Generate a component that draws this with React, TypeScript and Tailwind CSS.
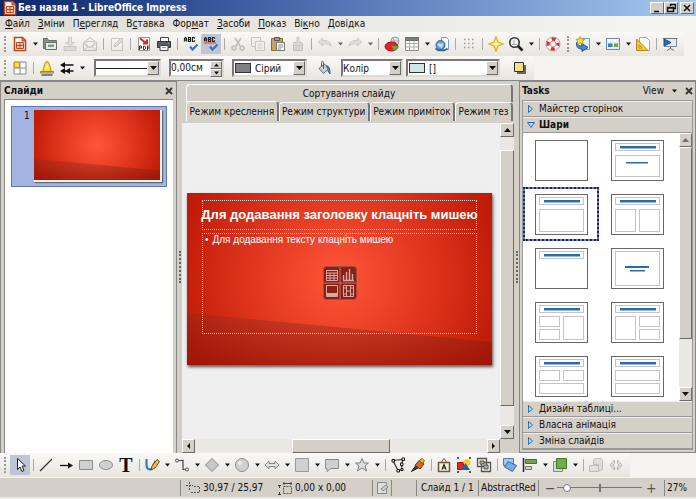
import React, { useState } from 'react';
import clsx from 'clsx';

const raised = 'border border-t-white border-l-white border-r-[#6b6b6b] border-b-[#6b6b6b] bg-[#d4d0c8]';
const sunken = 'border-2 border-t-[#777] border-l-[#777] border-r-[#dedbd5] border-b-[#dedbd5] bg-white';

interface IconProps {
  children: React.ReactNode;
  faded?: boolean;
}

const Icon: React.FC<IconProps> = ({ children, faded }) => (
  <svg viewBox="0 0 16 16" className={clsx('w-4 h-4 shrink-0', faded && 'opacity-35')} fill="none" stroke="#555" strokeWidth="1" aria-hidden="true">
    {children}
  </svg>
);

const impress = (
  <>
    <path d="M2.500 1.500h8l3 3v10h-11z" fill="#fff" stroke="#b8491f" strokeWidth="1.600" />
    <path d="M10 1v4h4z" fill="#d9764d" stroke="#b8491f" />
    <path d="M4.500 6.500h7v6h-7z" fill="#f3c9b4" stroke="#b8491f" />
    <path d="M5 9.500h6M8 7v5" stroke="#b8491f" />
  </>
);

const check = <path d="M7 10.500l2.500 3L14.500 8.500" stroke="#3f74bd" strokeWidth="2.200" />;

const abc = (
  <path d="M1.500 5.500v-3l1-1 1 1v3M1.500 4h2M5.500 1.500v4h2v-4zM5.500 3.500h2M12 2.500l-1-1H9.500v4H11l1-1" stroke="#222" strokeWidth="1.200" />
);

const icons: Record<string, React.ReactNode> = {
  impress,
  open: (
    <>
      <path d="M1.500 12.500v-10h4l1 2h8v8z" fill="#8c948a" stroke="#676e66" />
      <path d="M3.500 6.500h11v7h-11z" fill="#e8eae6" stroke="#676e66" />
      <path d="M6 8.500h6v2.500H6z" fill="#8c948a" stroke="none" />
    </>
  ),
  save: <path d="M6.500 1.500h3v5h3L8 10.500 3.500 6.500h3zM2 10.500h12v4H2z" fill="#bbb" stroke="#888" />,
  mail: (
    <>
      <path d="M1.500 6.500L8 1.500l6.500 5v8h-13z" fill="#eee" stroke="#666" />
      <path d="M4 5.500h8v4l-4 2-4-2zM1.500 14.500l5-4M14.500 14.500l-5-4M1.500 7l6.500 4.500L14.500 7" fill="#fff" stroke="#777" />
    </>
  ),
  edit: (
    <>
      <path d="M2.500 2.500h11v12h-11z" fill="#f4f4f4" stroke="#777" />
      <path d="M5 11l1-3 6-6 2 2-6 6z" fill="#bbb" stroke="#777" />
    </>
  ),
  pdf: (
    <>
      <path d="M2.500 1.500h11v13h-11z" fill="#fff" stroke="#999" />
      <path d="M4 2.500l7 5M11 3.500v4H7" stroke="#e0202c" strokeWidth="2" />
      <path d="M3.500 14v-4h2v2h-2M7.500 10v3.500h1l1-1V11l-1-1zM11.500 14v-4h2M11.500 12h2" stroke="#333" />
    </>
  ),
  print: (
    <>
      <path d="M4.500 1.500h8v5h-8z" fill="#fff" stroke="#444" />
      <path d="M1.500 5.500h13v6h-13z" fill="#596064" stroke="#33383a" />
      <path d="M4 9.500h8v5H4z" fill="#fff" stroke="#444" />
      <path d="M6 11.500h4M12 7.500h1" stroke="#8ea08c" />
    </>
  ),
  spell: <>{abc}{check}</>,
  autospell: (
    <>
      {abc}
      <path d="M1 7h12" stroke="#e33" />
      {check}
    </>
  ),
  cut: (
    <>
      <path d="M5 2l5 8M11 2l-5 8" stroke="#666" strokeWidth="1.600" />
      <circle cx="4" cy="12" r="2" stroke="#666" strokeWidth="1.500" />
      <circle cx="12" cy="12" r="2" stroke="#666" strokeWidth="1.500" />
    </>
  ),
  copy: (
    <>
      <path d="M1.500 1.500h9v9h-9z" fill="#eee" stroke="#777" />
      <path d="M5.500 5.500h9v9h-9z" fill="#fff" stroke="#777" />
      <path d="M7.500 8h5M7.500 10h5M7.500 12h5" stroke="#999" />
    </>
  ),
  paste: (
    <>
      <path d="M1.500 2.500h11v12h-11z" fill="#c9a25a" stroke="#8d6a2b" />
      <path d="M4.500 1.500h5v3h-5z" fill="#999" stroke="#555" />
      <path d="M6.500 6.500h8v8h-8z" fill="#fff" stroke="#777" />
      <path d="M8 9h5M8 11h5M8 13h3" stroke="#888" />
    </>
  ),
  brush: <path d="M7 1.500h2v5h3l1 3H3l1-3h3zM3.500 9.500h9v5h-9zM6 11v3M9 11v3" fill="#bbb" stroke="#777" />,
  undo: <path d="M1.500 6l4-4v2.500c6-.5 8.500 2 8.500 6-1.500-2.500-4-3-8.500-2.500v2z" fill="#bbb" stroke="#888" />,
  redo: <path d="M14.500 6l-4-4v2.500c-6-.5-8.500 2-8.500 6 1.500-2.500 4-3 8.500-2.500v2z" fill="#bbb" stroke="#888" />,
  chart: (
    <>
      <circle cx="11" cy="5" r="4" fill="#dfe3e0" stroke="#999" />
      <path d="M9 1.500l3 7M7.500 5h7" stroke="#aaa" />
      <ellipse cx="7.500" cy="10.500" rx="6.500" ry="4.500" fill="#e3202c" stroke="#ab1420" />
      <path d="M7.500 10H14c0 2.500-1.500 4-4 4.500z" fill="#55b33b" stroke="none" />
    </>
  ),
  table: (
    <>
      <path d="M1.500 1.500h13v13h-13z" fill="#fff" stroke="#888" />
      <path d="M1.500 1.500h13v3h-13z" fill="#7b8180" stroke="#6b706f" />
      <path d="M2 7.500h12M2 11h12M5.500 5v9.500M10 5v9.500" stroke="#a9adab" />
    </>
  ),
  link: (
    <>
      <path d="M7.500 1.500h5l2 2v10h-7z" fill="#fff" stroke="#7b9dbd" />
      <circle cx="6.500" cy="9" r="4.500" fill="#6d9fd4" stroke="#2d649c" />
      <path d="M3 8.500c2-3 3 0 5-1s1 3 0 4-3-1-5-3z" fill="#c5e0f4" stroke="none" />
      <path d="M1.500 12.500l3 2h6l3-2" stroke="#2d649c" strokeWidth="1.600" />
    </>
  ),
  dots: <path d="M3 3.500h12M3 7.500h12M3 11.500h12" stroke="#999" strokeDasharray="1.500 2.500" strokeWidth="1.500" />,
  navigator: <path d="M8 1l2 5 5 2-5 2-2 5-2-5-5-2 5-2z" fill="#fff3a0" stroke="#e0ad12" strokeWidth="1.300" />,
  zoom: (
    <>
      <circle cx="6.500" cy="6.500" r="4.700" fill="#eef3f5" stroke="#333" strokeWidth="1.600" />
      <path d="M10 10l4.500 4.500" stroke="#222" strokeWidth="2.600" />
      <path d="M6 4v5M4 8.500h5" stroke="#aaa" />
    </>
  ),
  help: (
    <>
      <circle cx="8" cy="8" r="5" stroke="#fff" strokeWidth="4" />
      <circle cx="8" cy="8" r="5" stroke="#d8323b" strokeWidth="4" strokeDasharray="3.930 3.930" strokeDashoffset="2" />
      <circle cx="8" cy="8" r="7" stroke="#c99" />
      <circle cx="8" cy="8" r="3" stroke="#c99" />
    </>
  ),
  newSlide: (
    <>
      <path d="M6.500 2.500h8v11h-8z" fill="#e8f0f6" stroke="#7e99b2" />
      <path d="M1.500 6.500c1 3 3 3.500 5.500 3.500V7.500l6 4-6 4V13c-4 0-6-2-5.500-6.500z" fill="#4c88c6" stroke="#23588f" />
      <path d="M5 .5l1.500 2.500 3 .5-2 2 .5 2.500-3-1-2.500 1V5L1 3.500 4 3z" fill="#ffdf3d" stroke="#c79a12" />
    </>
  ),
  layout: (
    <>
      <path d="M1.500 2.500h13v11h-13z" fill="#e1edf5" stroke="#6f8ba5" />
      <path d="M3 4.500h10" stroke="#fff" strokeWidth="2" />
      <path d="M3 7.500h4.500V11H3z" fill="#3f7fb8" stroke="none" />
      <path d="M9 7.500h4V11H9z" fill="#71a640" stroke="none" />
    </>
  ),
  design: (
    <>
      <path d="M4.500 1.500h7l3 3v10h-10z" fill="#fafafa" stroke="#aaa" />
      <path d="M1.500 3v11.500H13z" fill="#f1c644" stroke="#b38a18" />
      <path d="M4 9v3h3z" fill="#fff" stroke="#b38a18" />
    </>
  ),
  present: (
    <>
      <path d="M2.500 2.500h12v8h-12z" fill="#e5ebef" stroke="#7f8a92" />
      <path d="M1 2.500h14.500M8.500 11v2M5 14.500l3.500-2 3.500 2" stroke="#6c757c" />
      <path d="M2 3l7 3.500L2 10z" fill="#2f69a8" stroke="#1c477a" />
    </>
  ),
  quad: (
    <>
      <path d="M2 2h12v12H2z" fill="#fff" stroke="#888" />
      <path d="M2.500 2.500h5v5h-5z" fill="#ffe03c" stroke="#c7a116" />
      <path d="M8 2v12M2 8h12" stroke="#888" />
    </>
  ),
  highlight: (
    <>
      <path d="M3.500 12c1-1 1.500-10.500 4.500-10.500S11.500 11 12.500 12z" fill="#ffd83b" stroke="#ba8f14" />
      <path d="M6.500 9.500L8 4.500l1.500 5M7 8h2" stroke="#fff5b8" />
      <path d="M1.500 11.500h13v1.500h-13z" fill="#f0c62d" stroke="#ab8314" />
      <path d="M2.500 15h11" stroke="#3465a4" strokeWidth="1.500" />
    </>
  ),
  arrows: (
    <>
      <path d="M5 5h9.500M5 11h9.500" stroke="#111" strokeWidth="1.500" />
      <path d="M1 5l5-3v6zM1 11l5-3v6zM6 11l5-3v6z" fill="#111" stroke="none" />
    </>
  ),
  bucket: (
    <>
      <path d="M3 8.500L8.500 4l4 5-5 4.500z" fill="#ccd1d1" stroke="#666" />
      <path d="M7.500 9V2.500c0-1.500-2-1.500-2 0V6" stroke="#555" />
      <path d="M10 6c3-.5 4 2 4 8l-2-3V8z" fill="#648fc9" stroke="#345f97" />
    </>
  ),
  shadow: (
    <>
      <path d="M5 5h9v9H5z" fill="#666" stroke="none" />
      <path d="M2.500 2.500h9v9h-9z" fill="#fbdf7c" stroke="#333" />
    </>
  ),
  select: <path d="M5.500 1.500v11l2.500-2.500 2 4.500 2-1-2-4.500h3.500z" fill="#fff" stroke="#222" />,
  line: <path d="M2 14L14 2" stroke="#333" strokeWidth="1.200" />,
  arrow: (
    <>
      <path d="M2 8.500h9" stroke="#111" strokeWidth="1.300" />
      <path d="M10 5.500l5 3-5 3z" fill="#111" stroke="none" />
    </>
  ),
  rect: <path d="M1.500 3.500h13v9h-13z" fill="#d0d0d0" stroke="#8c8c8c" />,
  ellipse: <ellipse cx="8" cy="8" rx="6.500" ry="4.500" fill="#d0d0d0" stroke="#8c8c8c" />,
  curve: (
    <>
      <path d="M2.500 2v5c0 7 6 7 7 1l2-4" stroke="#397ab9" strokeWidth="2.200" />
      <path d="M7 13l1-4 5-6.500 2.500 2L11 11z" fill="#efc33a" stroke="#604d1c" />
    </>
  ),
  connector: (
    <>
      <path d="M4 3.500h5v9h3" stroke="#444" strokeWidth="1.200" />
      <circle cx="3" cy="3.500" r="1.500" fill="#fff" stroke="#444" />
      <circle cx="13" cy="12.500" r="1.500" fill="#fff" stroke="#444" />
    </>
  ),
  diamond: <path d="M8 1.500l6.500 6.500L8 14.500 1.500 8z" fill="#c6c9c8" stroke="#858988" />,
  circle: (
    <>
      <circle cx="8" cy="8" r="6.500" fill="#cfd1d0" stroke="#8c8f8e" />
      <circle cx="6" cy="6" r="2" fill="#eee" stroke="none" />
    </>
  ),
  block: <path d="M1 8l4-4v2.500h6V4l4 4-4 4V9.500H5V12z" fill="#e2e2e2" stroke="#858988" />,
  square: <path d="M1.500 1.500h13v13h-13z" fill="#cfd1d0" stroke="#999" />,
  callout: <path d="M1.500 2.500h13v9H7l-4 3v-3H1.500z" fill="#cfd1d0" stroke="#858988" />,
  star: <path d="M8 1.500l2 4.500h4.500L11 9l1.500 5L8 11l-4.500 3L5 9 1.500 6H6z" fill="#dcdddc" stroke="#7e8281" />,
  points: (
    <>
      <path d="M3 3.500l10-1-1.500 5 .5 5-4 1z" stroke="#333" strokeWidth="1.200" />
      <path d="M2 2.500h2.500V5H2zM12 1h2.500v2.500H12zM7 12.500h2.500V15H7zM10.500 6H13v2.500h-2.500zM11 11.500h2v2h-2z" fill="#fff" stroke="#111" />
    </>
  ),
  glue: (
    <>
      <path d="M1.500 14.500l4-5.500 2.500 2z" fill="#333" stroke="#222" />
      <path d="M5 8.500l4-5 5 3.500-4 5z" fill="#d9682c" stroke="#5a3312" />
      <path d="M9 4l3-2.500 2.500 2L13 6z" fill="#e8c23a" stroke="#86661a" />
    </>
  ),
  fontwork: (
    <>
      <path d="M2.500 5.500h11v9h-11z" fill="#f2ecd8" stroke="#6b5a3f" strokeWidth="1.500" />
      <path d="M5 5.500l3-4 3 4" stroke="#6b5a3f" />
      <path d="M6 12.500L8 7.500l2 5M7 11h2" stroke="#222" strokeWidth="1.200" />
    </>
  ),
  gallery: (
    <>
      <path d="M1.500 5.500h6v7h-6z" fill="#d82a20" stroke="#a11" />
      <circle cx="11" cy="5.500" r="3.500" fill="#f7cf2d" stroke="none" />
      <path d="M9.500 6l4.500 7H5z" fill="#275cae" stroke="none" />
      <path d="M1 1h2M13 1h2M1 15h2M13 15h2" stroke="#222" strokeWidth="1.500" />
    </>
  ),
  group: (
    <>
      <path d="M1.500 1.500h9v8h-9zM5.500 5.500h9v9h-9z" fill="#eee" stroke="#555" strokeWidth="1.300" />
      <path d="M4 4h4v3H4zM8 8h4v4H8z" fill="#b8b48a" stroke="#555" />
    </>
  ),
  rotate: (
    <>
      <path d="M1.500 1.500h10v7h-10z" fill="#a9c9ec" stroke="#4a7fbd" />
      <path d="M6 4.500l8.500 4-4 6-8-4.500z" fill="#7facde" stroke="#3468a8" />
    </>
  ),
  align: (
    <>
      <path d="M1.500 1v14" stroke="#222" strokeWidth="1.500" />
      <path d="M3.500 2.500h11v4h-11z" fill="#6fa54b" stroke="#3e6c55" />
      <path d="M3.500 9.500h6v3h-6z" fill="#cfd7dd" stroke="#66757e" />
    </>
  ),
  arrange: (
    <>
      <path d="M1.500 4.500h9v10h-9z" fill="#cdd" stroke="#888" />
      <path d="M4.500 1.500h10v10h-10z" fill="#72ad4a" stroke="#447a24" />
    </>
  ),
  extrude: (
    <>
      <path d="M1.500 8.500h9v6h-9z" fill="#ccc" stroke="#666" />
      <path d="M5.500 2.500l2-1h6l1 2v9l-2 1h-2v-6h-5z" fill="#bbb" stroke="#666" />
    </>
  ),
  code: <path d="M6.500 3L2 8l4.500 5V9.500L5 8l1.500-1.500zM9.500 3L14 8l-4.500 5V9.500L11 8 9.500 6.500z" fill="#bbb" stroke="#555" />,
  position: (
    <>
      <path d="M4.500 2v8M1 5.500h7" stroke="#3838e0" strokeDasharray="2 1" />
      <path d="M6 12.500h8.500v-6H9" stroke="#555" strokeDasharray="2 1" />
    </>
  ),
  size: (
    <>
      <path d="M6.500 6.500h8v7h-8z" stroke="#555" strokeDasharray="2 1" />
      <path d="M6 3.500h9M7 2v3M14 2v3M2.500 6v2M2.500 12v2M1 5.500h3M1 14.500h3" stroke="#444" />
    </>
  ),
  signature: (
    <>
      <path d="M3.500 2.500h9v11h-9z" stroke="#888" fill="#ddd" />
      <path d="M7 9l5-4 2 2-5 4z" fill="#ccc" stroke="#888" />
    </>
  ),
};

const Triangle: React.FC<{ className?: string; d?: string }> = ({ className = 'w-[7px]', d = 'M0 1h7L3.500 5z' }) => (
  <svg viewBox="0 0 7 6" className={clsx('h-1.5 shrink-0', className)} fill="#111" aria-hidden="true">
    <path d={d} />
  </svg>
);

const UP = 'M0 5h7L3.500 1z';
const LEFT = 'M5 0v6L2 3z';
const RIGHT = 'M2 0v6l3-3z';

// name, label, state flags: d = has a drop-down, f = faded, a = active
type Tool = '|' | '::' | [string, string, string?];

const standardTools: Tool[] = [
  ['impress', 'Створити', 'd'], ['open', 'Відкрити'], ['save', 'Зберегти', 'f'], ['mail', 'Надіслати', 'f'], '|',
  ['edit', 'Редагувати', 'f'], '|', ['pdf', 'Експорт у PDF'], ['print', 'Друк'], '|',
  ['spell', 'Перевірка правопису'], ['autospell', 'Автоперевірка', 'a'], '|',
  ['cut', 'Вирізати', 'f'], ['copy', 'Копіювати', 'f'], ['paste', 'Вставити'], ['brush', 'Пензель', 'f'], '|',
  ['undo', 'Скасувати', 'df'], ['redo', 'Повторити', 'df'], '|',
  ['chart', 'Діаграма'], ['table', 'Таблиця', 'd'], ['link', 'Гіперпосилання'], '|', ['dots', 'Сітка'], '|',
  ['navigator', 'Навігатор'], ['zoom', 'Масштаб', 'd'], '|', ['help', 'Довідка'], '::',
  ['newSlide', 'Новий слайд', 'd'], ['layout', 'Розмітка', 'd'], ['design', 'Дизайн слайду'], '|', ['present', 'Демонстрація'],
];

const drawingTools: Tool[] = [
  ['select', 'Вибір', 'a'], '|', ['line', 'Лінія'], ['arrow', 'Стрілка'], ['rect', 'Прямокутник'], ['ellipse', 'Еліпс'], ['text', 'Текст'], '|',
  ['curve', 'Крива', 'd'], ['connector', 'Сполучення', 'd'], ['diamond', 'Основні фігури', 'd'], ['circle', 'Символи', 'd'],
  ['block', 'Блочні стрілки', 'd'], ['square', 'Блок-схеми', 'd'], ['callout', 'Виноски', 'd'], ['star', 'Зірки', 'd'], '|',
  ['points', 'Точки'], ['glue', 'Точки з’єднання'], '|', ['fontwork', 'Fontwork'], ['gallery', 'З файлу'], ['group', 'Галерея'], '|',
  ['rotate', 'Обертання'], ['align', 'Вирівнювання', 'd'], ['arrange', 'Розташування', 'd'], '|',
  ['extrude', 'Об’ємність', 'f'], ['code', 'Взаємодія', 'f'],
];

const Grip: React.FC = () => (
  <span className="w-2.5 shrink-0 flex justify-center">
    <span className="h-4 border-l-2 border-dotted border-[#999]" />
  </span>
);

const Divider: React.FC<{ tight?: boolean }> = ({ tight }) => (
  <span className={clsx('shrink-0 flex justify-center', tight ? 'w-1.5' : 'w-[7px]')}>
    <span className="h-3 w-px bg-[#aaa]" />
  </span>
);

const Toolbar: React.FC<{ children: React.ReactNode }> = ({ children }) => (
  <div className="h-6 shrink-0 flex bg-[#f6f4f1]">
    <div className="flex items-center pr-1 bg-linear-to-b from-[#faf9f7] to-[#e8e5df]">
      <Grip />
      {children}
    </div>
  </div>
);

const ToolItem: React.FC<{ tool: Tool; tight?: boolean }> = ({ tool, tight }) => {
  if (tool === '|') return <Divider tight={tight} />;
  if (tool === '::') return <Grip />;
  const [name, label, flags = ''] = tool;
  const faded = flags.includes('f');
  return (
    <>
      <button
        aria-label={label}
        className={clsx('w-5 h-5 shrink-0 flex items-center justify-center', flags.includes('a') && 'bg-[#c0c5d6]')}
      >
        {name === 'text' ? (
          <span className="font-['Liberation_Serif',serif] text-xl leading-5 font-bold text-[#111]">T</span>
        ) : (
          <Icon faded={faded}>{icons[name]}</Icon>
        )}
      </button>
      {flags.includes('d') && (
        <button aria-label={`${label}: меню`} className="w-2.5 h-5 shrink-0 flex items-center justify-center">
          <Triangle className={faded ? 'w-[5px] opacity-60' : 'w-[5px]'} />
        </button>
      )}
    </>
  );
};

const menus = [
  ['', 'Ф', 'айл'], ['', 'З', 'міни'], ['П', 'е', 'регляд'], ['В', 'с', 'тавка'], ['Фор', 'м', 'ат'],
  ['', 'З', 'асоби'], ['', 'П', 'оказ'], ['Ві', 'к', 'но'], ['', 'Д', 'овідка'],
];

interface ComboProps {
  label: string;
  value: string;
  className: string;
  children?: React.ReactNode;
}

const Combo: React.FC<ComboProps> = ({ label, value, className, children }) => (
  <label className={clsx('relative flex items-center h-[18px] shrink-0', sunken, className)}>
    {children}
    <select aria-label={label} className="appearance-none flex-1 min-w-0 h-full bg-transparent outline-none">
      <option>{value}</option>
    </select>
    <span className={clsx('w-3 h-3.5 shrink-0 flex items-center justify-center pointer-events-none', raised)}>
      <Triangle />
    </span>
  </label>
);

const Titlebar: React.FC = () => (
  <header className="h-4 shrink-0 flex items-center gap-1 pl-0.5 pr-0.5 bg-linear-to-r from-[#0a246a] via-[#5577b8] to-[#a6caf0] text-white">
    <span className="w-3 h-3.5 flex items-center">
      <Icon>{impress}</Icon>
    </span>
    <h1 className="flex-1 font-bold whitespace-nowrap">Без назви 1 - LibreOffice Impress</h1>
    <div className="flex items-center">
      {[
        ['Згорнути', 'M2 8.500h5'],
        ['Відновити', 'M4.500 3V1.500h5v4H8M1.500 4.500h6v4h-6zM1.500 5h6'],
        ['Закрити', 'M2 2l6 6M8 2L2 8'],
      ].map(([label, d]) => (
        <button key={label} aria-label={label} className={clsx('w-3.5 h-3 flex items-center justify-center last:ml-0.5', raised)}>
          <svg viewBox="0 0 10 10" className="w-2.5 h-2.5" fill="none" stroke="#111" strokeWidth="1.500">
            <path d={d} />
          </svg>
        </button>
      ))}
    </div>
  </header>
);

const LineTools: React.FC = () => (
  <>
    <ToolItem tool={['quad', 'Стилі']} />
    <Divider />
    <ToolItem tool={['highlight', 'Лінія']} />
    <ToolItem tool={['arrows', 'Кінці ліній', 'd']} />
    <div className="flex items-center gap-2 pl-[7px]">
      <Combo label="Стиль лінії" value="" className="w-[67px]">
        <span className="absolute left-0 right-3 h-px bg-[#222]" />
      </Combo>
      <div className={clsx('flex h-[18px] w-[55px] shrink-0', sunken)}>
        <input aria-label="Ширина лінії" defaultValue="0,00см" className="flex-1 min-w-0 outline-none" />
        <div className="w-3 flex flex-col">
          <button aria-label="Більше" className={clsx('flex-1 flex items-center justify-center', raised)}>
            <Triangle d={UP} className="w-[5px]" />
          </button>
          <button aria-label="Менше" className={clsx('flex-1 flex items-center justify-center', raised)}>
            <Triangle className="w-[5px]" />
          </button>
        </div>
      </div>
      <Combo label="Колір лінії" value="Сірий" className="w-[75px]">
        <span className="w-4 h-2.5 ml-px mr-1 border border-[#333] bg-[#808080]" />
      </Combo>
    </div>
    <div className="flex items-center px-[7px]">
      <ToolItem tool={['bucket', 'Область']} />
    </div>
    <div className="flex items-center gap-[3px] pr-2.5">
      <Combo label="Тип заливки" value="Колір" className="w-[62px]" />
      <Combo label="Заливка" value="[]" className="w-[94px]">
        <span className="w-4 h-2.5 ml-px mr-1 border border-[#333] bg-[#cfe7e5]" />
      </Combo>
    </div>
    <ToolItem tool={['shadow', 'Тінь']} />
  </>
);

const SlideArt: React.FC = () => (
  <svg viewBox="0 0 305 172" preserveAspectRatio="none" className="absolute inset-0 w-full h-full" aria-hidden="true">
    <defs>
      <radialGradient id="glow" gradientUnits="userSpaceOnUse" cx="152" cy="86" r="175">
        <stop offset="0" stopColor="#ff5538" />
        <stop offset="0.500" stopColor="#e0361e" />
        <stop offset="0.900" stopColor="#c21d09" />
        <stop offset="1" stopColor="#bc1a08" />
      </radialGradient>
      <linearGradient id="floor" x1="0" y1="0" x2="0" y2="1">
        <stop offset="0" stopColor="#7c2a1c" stopOpacity="0.300" />
        <stop offset="1" stopColor="#8a1004" stopOpacity="0.550" />
      </linearGradient>
    </defs>
    <path d="M0 0h305v172H0z" fill="url(#glow)" />
    <path d="M0 120L305 149v23H0z" fill="url(#floor)" />
  </svg>
);

const CloseMark: React.FC = () => (
  <svg viewBox="0 0 8 8" className="w-2 h-2" stroke="#333" strokeWidth="1.800" aria-hidden="true">
    <path d="M1 1l6 6M7 1L1 7" />
  </svg>
);

const SlidePanel: React.FC = () => (
  <aside className="w-[177px] shrink-0 flex flex-col px-[3px] border-l border-t border-r border-[#888]">
    <div className="h-[17px] shrink-0 flex items-center justify-between">
      <h2 className="font-bold">Слайди</h2>
      <button aria-label="Закрити панель слайдів" className="w-2">
        <CloseMark />
      </button>
    </div>
    <div className="flex-1 bg-white border-t border-l border-[#888] px-1.5 pt-1.5">
      <button className="w-full h-[81px] flex border border-[#5c78b5] bg-[#a3b4e2] pt-[3px] pl-3 pr-1 gap-1" aria-label="Слайд 1">
        <span className="leading-3">1</span>
        <span className="relative flex-1 h-[72px] border-r-2 border-b-2 border-[#f4f4f4] shadow-[1px_1px_1px_#666]">
          <SlideArt />
        </span>
      </button>
    </div>
  </aside>
);

const Splitter: React.FC = () => (
  <div className="w-[5px] shrink-0 flex items-center justify-center">
    <span className="h-8 border-l-2 border-dotted border-[#666]" />
  </div>
);

const InsertPad: React.FC = () => (
  <svg viewBox="0 0 34 34" className="w-[34px] h-[34px] mt-5" fill="none" stroke="#d8a9a2" aria-label="Вставити об’єкт">
    <rect x="0.500" y="0.500" width="33" height="33" rx="3" fill="#8a2018" stroke="#a04a40" />
    <path d="M17 1v32M1 17h32" stroke="#b8776f" />
    <path d="M3.500 4.500h11v10h-11zM3.500 7h11M3.500 9.500h11M3.500 12h11M7 7v7.500M11 7v7.500" />
    <path d="M20 14.500h11M20.500 14V9M23.500 14V6M26.500 14V3M29.500 14V8" strokeWidth="1.400" />
    <path d="M3.500 19.500h11v11h-11z" />
    <path d="M4 28.500h10" strokeWidth="3" />
    <path d="M20.500 19.500h10v11h-10zM23.500 20v10M27.500 20v10M23.500 25h4M20.500 22h3M20.500 28h3M27.500 22h3M27.500 28h3" />
  </svg>
);

const tabs = ['Режим креслення', 'Режим структури', 'Режим приміток', 'Режим тез'];
const tabEdge = 'border-t border-l border-white border-r-2 border-r-[#777] rounded-t-sm';

const Workspace: React.FC = () => {
  const [view, setView] = useState(tabs[0]);

  return (
    <main className="flex-1 min-w-0 flex flex-col pt-[3px]">
      <div role="tablist" className="px-1 pr-px shrink-0">
        <button role="tab" aria-selected={false} className={clsx('block w-full h-[18px]', tabEdge)}>Сортування слайду</button>
        <div className="flex h-[19px]">
          {tabs.map((tab) => (
            <button
              key={tab}
              role="tab"
              aria-selected={tab === view}
              onClick={() => setView(tab)}
              className={clsx('flex-auto whitespace-nowrap', tabEdge, tab === view && '-mt-px')}
            >
              {tab}
            </button>
          ))}
        </div>
      </div>
      <div className="flex-1 min-h-0 mt-0.5 flex">
        <div className="flex-1 min-w-0 flex flex-col">
          <div className="flex-1 bg-[#efefef] flex items-center pl-[5px] pr-2 pb-1">
            <div className="relative w-full aspect-[305/172] shadow-[1px_2px_3px_#555]">
              <SlideArt />
              <div className="relative px-[15px] pt-[7px] flex flex-col gap-[3px] font-['Liberation_Sans',sans-serif] text-white whitespace-nowrap">
                <h3 className="h-[30px] border border-dotted border-[#ddd] flex items-center justify-center text-[13px] font-bold">
                  Для додавання заголовку клацніть мишею
                </h3>
                <div className="h-[101px] border border-dotted border-[#ddd] flex flex-col items-center">
                  <p className="self-stretch flex gap-1 pl-0.5 leading-3">
                    <span>•</span>
                    <span>Для додавання тексту клацніть мишею</span>
                  </p>
                  <InsertPad />
                </div>
              </div>
            </div>
          </div>
          <div className="h-3.5 shrink-0 flex bg-[#e9e8e5]">
            <button aria-label="Ліворуч" className={clsx('w-[13px] flex items-center justify-center', raised)}><Triangle d={LEFT} /></button>
            <div className="flex-1 flex justify-center">
              <div className={clsx('w-1/3', raised)} />
            </div>
            <button aria-label="Праворуч" className={clsx('w-[13px] flex items-center justify-center', raised)}><Triangle d={RIGHT} /></button>
          </div>
        </div>
        <div className="w-3.5 shrink-0 flex flex-col bg-[#e9e8e5]">
          <button aria-label="Вгору" className={clsx('h-3.5 flex items-center justify-center', raised)}><Triangle d={UP} /></button>
          <div className="flex-1 pt-[13px]">
            <div className={clsx('h-[93%]', raised)} />
          </div>
          <button aria-label="Вниз" className={clsx('h-3.5 flex items-center justify-center', raised)}><Triangle /></button>
          <div className="h-3.5 bg-[#d4d0c8]" />
        </div>
      </div>
    </main>
  );
};

interface ThumbLayout {
  name: string;
  boxes: number[][];
  bars: number[][];
}

const titleBox = [4.5, 3.5, 44, 7];
const titleBar = [9, 6, 36, 2.5];

const layouts: ThumbLayout[] = [
  { name: 'Порожній слайд', boxes: [], bars: [] },
  { name: 'Титульний слайд', boxes: [titleBox, [4.5, 15.5, 44, 21]], bars: [titleBar, [15, 22, 22, 1.5]] },
  { name: 'Заголовок, вміст', boxes: [titleBox, [4.5, 15.5, 44, 22]], bars: [titleBar] },
  { name: 'Заголовок і два вмісти', boxes: [titleBox, [4.5, 15.5, 20, 22], [28.5, 15.5, 20, 22]], bars: [titleBar] },
  { name: 'Лише заголовок', boxes: [titleBox], bars: [titleBar] },
  { name: 'Текст по центру', boxes: [[4.5, 3.5, 44, 34]], bars: [[14, 18, 24, 2], [19, 22, 15, 1.5]] },
  { name: 'Два вмісти й вміст', boxes: [titleBox, [4.5, 14.5, 20, 10], [4.5, 27.5, 20, 10], [28.5, 14.5, 20, 23]], bars: [titleBar] },
  { name: 'Вміст і два вмісти', boxes: [titleBox, [4.5, 14.5, 20, 23], [28.5, 14.5, 20, 10], [28.5, 27.5, 20, 10]], bars: [titleBar] },
  { name: 'Два вмісти над вмістом', boxes: [titleBox, [4.5, 14.5, 20, 10], [28.5, 14.5, 20, 10], [4.5, 27.5, 44, 10]], bars: [titleBar] },
  { name: 'Вміст над вмістом', boxes: [titleBox, [4.5, 14.5, 44, 10], [4.5, 27.5, 44, 10]], bars: [titleBar] },
];

const Thumb: React.FC<{ layout: ThumbLayout }> = ({ layout }) => (
  <svg viewBox="0 0 53 41" className="w-[53px] h-[41px]" aria-hidden="true">
    <rect x="0.500" y="0.500" width="52" height="40" fill="#fff" stroke="#666" />
    {layout.boxes.map(([x, y, w, h], i) => (
      <rect key={i} x={x} y={y} width={w} height={h} fill="none" stroke="#c4c4c4" />
    ))}
    {layout.bars.map(([x, y, w, h], i) => (
      <rect key={i} x={x} y={y} width={w} height={h} fill="#2a6ca8" />
    ))}
  </svg>
);

const Section: React.FC<{ title: string; open?: boolean }> = ({ title, open }) => (
  <button
    aria-expanded={!!open}
    className={clsx('w-full h-4 shrink-0 flex items-center gap-1 pl-1 border-t border-t-[#f0eeea] border-b border-b-[#999] text-left', open && 'font-bold')}
  >
    <svg viewBox="0 0 8 8" className="w-2 h-2" fill="#b4d5f2" stroke="#2f6da8" aria-hidden="true">
      <path d={open ? 'M.5 1.500h7L4 6.500z' : 'M1.500.5v7l4-3.500z'} />
    </svg>
    {title}
  </button>
);

const TasksPanel: React.FC = () => {
  const [selected, setSelected] = useState(2);

  return (
    <aside className="w-[177px] shrink-0 flex flex-col border border-[#888] px-0.5 pb-0.5">
      <div className="h-[18px] shrink-0 flex items-center">
        <h2 className="flex-1 font-bold">Tasks</h2>
        <button className="flex items-center gap-2">
          View <Triangle className="w-[5px]" />
        </button>
        <button aria-label="Закрити панель завдань" className="ml-2">
          <CloseMark />
        </button>
      </div>
      <div className="flex-1 min-h-0 flex flex-col border border-[#999]">
        <Section title="Майстер сторінок" />
        <Section title="Шари" open />
        <div className="flex-1 min-h-0 flex bg-white">
          <div className="flex-1 overflow-hidden grid grid-cols-2 content-start pr-1">
            {layouts.map((layout, i) => (
              <button
                key={layout.name}
                aria-label={layout.name}
                aria-pressed={i === selected}
                onClick={() => setSelected(i)}
                className={clsx(
                  'h-[54px] flex items-center justify-center border-2 border-dotted',
                  i === selected ? 'border-[#16226b] [background:linear-gradient(#fff,#fff)_padding-box,#6f80c8]' : 'border-transparent',
                )}
              >
                <Thumb layout={layout} />
              </button>
            ))}
          </div>
          <div className="w-[13px] shrink-0 flex flex-col bg-[#e9e8e5]">
            <button aria-label="Вгору" className={clsx('h-3.5 flex items-center justify-center', raised)}><Triangle d={UP} className="w-[7px] opacity-50" /></button>
            <div className="flex-1">
              <div className={clsx('h-4/5', raised)} />
            </div>
            <button aria-label="Вниз" className={clsx('h-3.5 flex items-center justify-center', raised)}><Triangle /></button>
          </div>
        </div>
        <Section title="Дизайн таблиці..." />
        <Section title="Власна анімація" />
        <Section title="Зміна слайдів" />
      </div>
    </aside>
  );
};

const statusCell = 'h-4 flex items-center border-l border-[#888] shrink-0';

const StatusBar: React.FC = () => (
  <footer className="h-[22px] shrink-0 flex items-center border-t border-[#f5f3f0] border-b-2 border-b-[#ebe8e3] whitespace-nowrap">
    <span className="w-[180px] shrink-0" />
    <span className="flex-1 h-4 flex items-center border-l border-[#888] gap-0.5 pl-1">
      <Icon>{icons.position}</Icon>
      <span className="w-[72px]">30,97 / 25,97</span>
      <Icon>{icons.size}</Icon>
      <span>0,00 x 0,00</span>
    </span>
    <span className={clsx('w-[19px] justify-center', statusCell)}><Icon>{icons.signature}</Icon></span>
    <span className={clsx('w-[25px]', statusCell)} />
    <span className={clsx('w-[62px] pl-1', statusCell)}>Слайд 1 / 1</span>
    <span className={clsx('w-[60px] pl-0.5', statusCell)}>AbstractRed</span>
    <span className={clsx('w-[126px] gap-1 pl-1.5', statusCell)}>
      <button aria-label="Зменшити" className="w-2 text-sm leading-3 text-[#555]">−</button>
      <input
        type="range"
        aria-label="Масштаб"
        defaultValue={8}
        className="w-[85px] h-2.5 appearance-none bg-[linear-gradient(#777,#777),linear-gradient(#777,#777)] bg-[size:100%_1px,2px_8px] bg-center bg-no-repeat [&::-webkit-slider-thumb]:appearance-none [&::-webkit-slider-thumb]:w-2 [&::-webkit-slider-thumb]:h-2 [&::-webkit-slider-thumb]:rounded-full [&::-webkit-slider-thumb]:bg-white [&::-webkit-slider-thumb]:border [&::-webkit-slider-thumb]:border-[#777]"
      />
      <button aria-label="Збільшити" className="w-2 text-sm leading-3 text-[#555]">+</button>
    </span>
    <span className={clsx('w-8 pl-0.5', statusCell)}>27%</span>
  </footer>
);

export default function App() {
  return (
    <div className="h-screen w-full overflow-hidden flex flex-col bg-[#d4d0c8] text-[#111] text-[10px] leading-4 font-['DejaVu_Sans_Condensed','DejaVu_Sans',sans-serif]">
      <Titlebar />
      <nav className="h-4 shrink-0 flex items-center gap-2 px-[5px] bg-linear-to-r from-[#e0ddd7] to-[#f7f5f2]">
        {menus.map(([before, key, after]) => (
          <button key={before + key + after}>
            {before}<u>{key}</u>{after}
          </button>
        ))}
      </nav>
      <Toolbar>
        {standardTools.map((tool, i) => <ToolItem key={i} tool={tool} />)}
      </Toolbar>
      <Toolbar>
        <LineTools />
      </Toolbar>
      <div className="flex-1 min-h-0 flex border-t border-[#888]">
        <SlidePanel />
        <Splitter />
        <Workspace />
        <Splitter />
        <TasksPanel />
      </div>
      <Toolbar>
        {drawingTools.map((tool, i) => <ToolItem key={i} tool={tool} tight />)}
      </Toolbar>
      <StatusBar />
    </div>
  );
}
